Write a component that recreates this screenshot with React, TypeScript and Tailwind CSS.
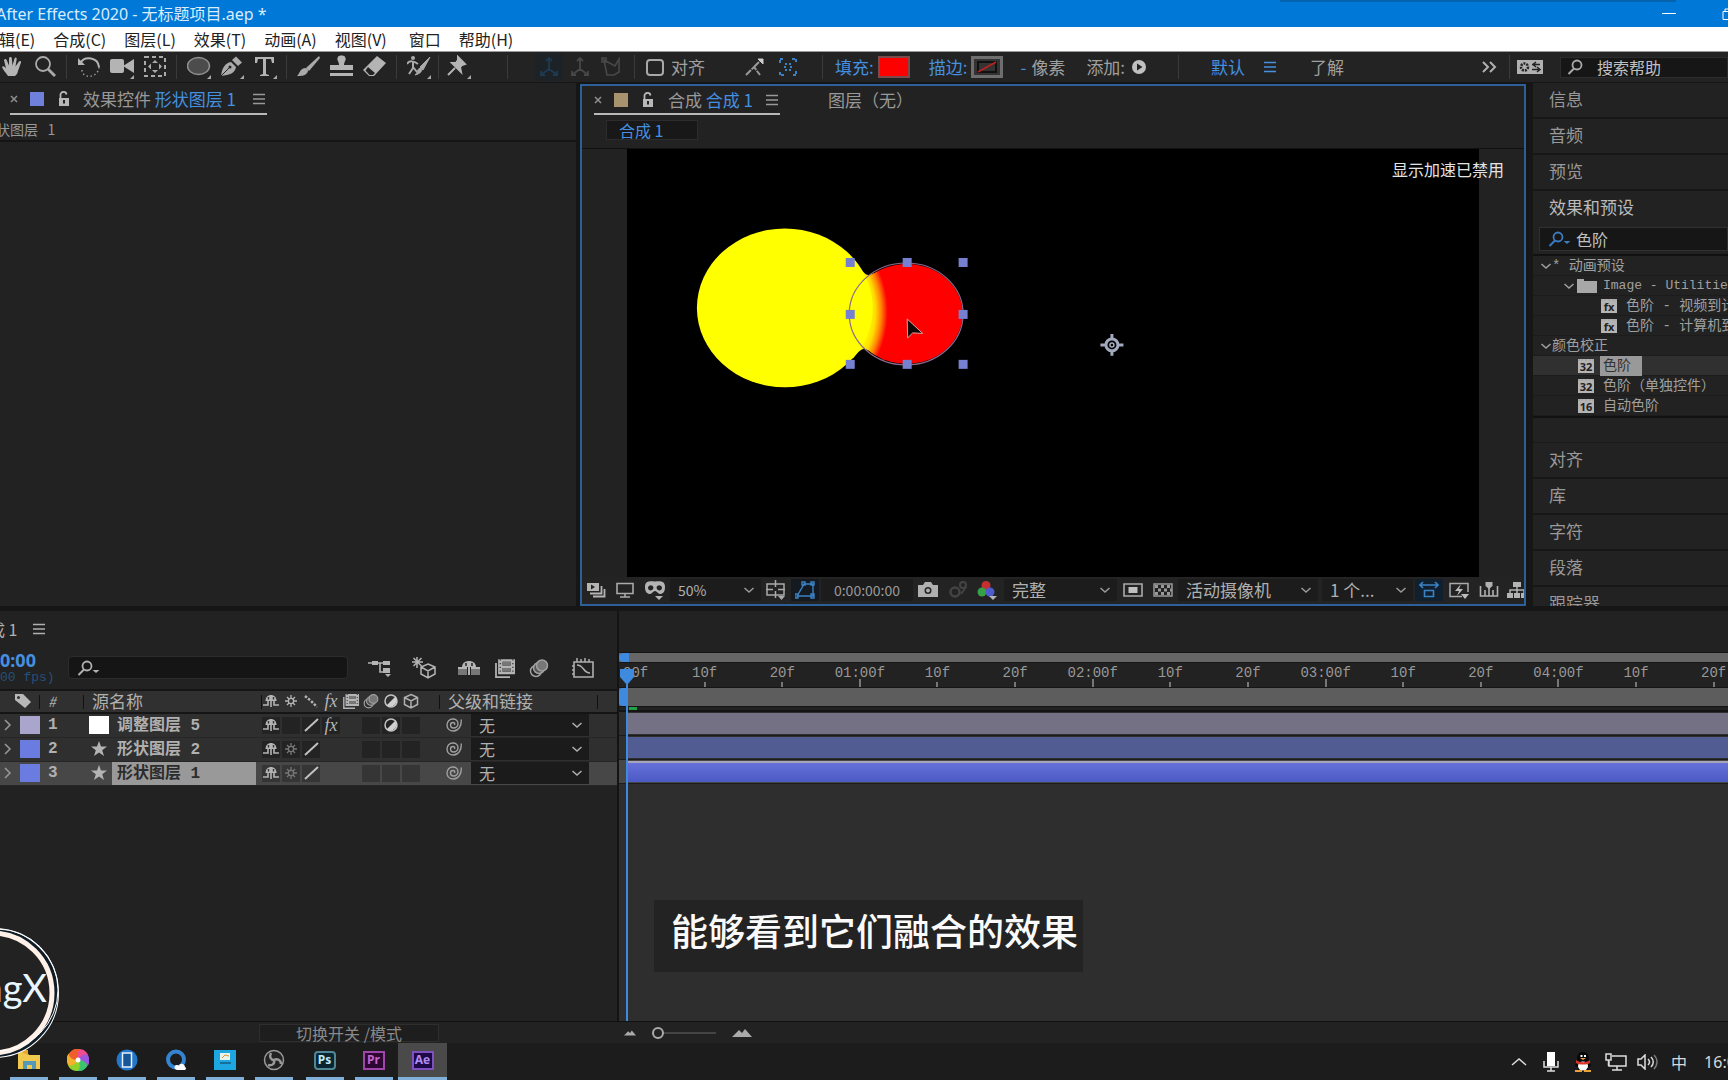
import type { ReactNode } from "react";
import clsx from "clsx";

type IconProps = { className?: string; children: ReactNode; box?: string };

const Icon = ({ className = "w-6 h-6", box = "0 0 24 24", children }: IconProps) => (
  <svg viewBox={box} className={clsx("shrink-0", className)} fill="none" stroke="none" aria-hidden="true">
    {children}
  </svg>
);

/* ---------- shared icons ---------- */

const Chevron = ({ className = "w-3 h-3" }: { className?: string }) => (
  <Icon className={className} box="0 0 12 12">
    <path d="M1.500 4 6 8l4.500-4" stroke="currentColor" strokeWidth="1.500" />
  </Icon>
);

const MenuLines = ({ className = "w-3 h-3" }: { className?: string }) => (
  <Icon className={className} box="0 0 12 12">
    <path d="M0 1.500h12M0 6h12M0 10.500h12" stroke="currentColor" strokeWidth="1.500" />
  </Icon>
);

const CloseMark = () => (
  <Icon className="size-2" box="0 0 8 8">
    <path d="m1 1 6 6M7 1 1 7" stroke="#909090" strokeWidth="1.500" />
  </Icon>
);

const SearchGlyph = ({ className, arrow = true }: { className?: string; arrow?: boolean }) => (
  <Icon className={clsx("w-6 h-4", className)} box="0 0 24 16">
    <circle cx="10" cy="6" r="4.500" stroke="currentColor" strokeWidth="1.800" />
    <path d="M7 9.500 1.500 15" stroke="currentColor" strokeWidth="2" />
    {arrow && <path d="M15.500 10h7L19 13z" fill="currentColor" />}
  </Icon>
);

const Lock = () => (
  <Icon className="w-3 h-4" box="0 0 12 16">
    <path d="M2.500 8V4.500a3 3 0 0 1 6-1" stroke="#b8b8b8" strokeWidth="1.800" />
    <path d="M1 7h10v8H1zM5 9v3.500h2V9z" fill="#b8b8b8" fillRule="evenodd" />
  </Icon>
);

const Shy = () => (
  <Icon className="w-4 h-4" box="0 0 16 16">
    <path d="M2.500 8C2.500 0 13.500 0 13.500 8z" fill="#b4b4b4" />
    <path d="M8 8v6M0 12h5V8M16 12h-5V8" stroke="#b4b4b4" strokeWidth="1.600" />
    <path d="M5.500 4v2.500M10.500 4v2.500" stroke="#333" strokeWidth="1.400" />
  </Icon>
);

const Sun = ({ dim }: { dim?: boolean }) => (
  <Icon className="w-4 h-4" box="0 0 16 16">
    <g stroke={dim ? "#777" : "#b4b4b4"} strokeWidth="1.300">
      <circle cx="8" cy="8" r="2.600" />
      <path d="M8 2v3M8 11v3M2 8h3M11 8h3M4 4l2 2M10 10l2 2M12 4l-2 2M4 12l2-2" />
    </g>
  </Icon>
);

const Slash = () => (
  <Icon className="w-4 h-4" box="0 0 16 16">
    <path d="M2 14 15 2" stroke="#c0c0c0" strokeWidth="2" />
  </Icon>
);

const DottedSlash = () => (
  <Icon className="w-4 h-4" box="0 0 16 16">
    <path d="M2 3l6 5 6 6" stroke="#b4b4b4" strokeWidth="2.500" strokeDasharray="2.500 1.500" />
  </Icon>
);

const Film = ({ className = "w-4 h-4" }: { className?: string }) => (
  <Icon className={className} box="0 0 16 16">
    <path d="M.8 4v11.200H12" stroke="#b4b4b4" strokeWidth="1.400" />
    <path d="M2.500 1H16v12H2.500zM6 3v3h6.500V3zM6 8v3h6.500V8z" fill="#b4b4b4" fillRule="evenodd" />
    <path d="M6 3h6.500v3H6zM6 8h6.500v3H6z" fill="#777" />
    <path d="M4.200 1v12M14.300 1v12" stroke="#333" strokeDasharray="1 2" />
  </Icon>
);

const MotionBlur = ({ className = "w-4 h-4" }: { className?: string }) => (
  <Icon className={className} box="0 0 20 20">
    <circle cx="7" cy="13" r="5.500" stroke="#a0a0a0" strokeWidth="1.500" />
    <circle cx="10" cy="10" r="5.500" fill="#555" stroke="#a0a0a0" strokeWidth="1.500" />
    <circle cx="13" cy="7.500" r="5.500" fill="#777" stroke="#a0a0a0" strokeWidth="1.500" />
  </Icon>
);

const HalfCircle = () => (
  <Icon className="w-4 h-4" box="0 0 16 16">
    <circle cx="8" cy="8" r="6" stroke="#c4c4c4" strokeWidth="1.500" />
    <path d="M12.500 3.500a6.500 6.500 0 0 1-9 9z" fill="#d0d0d0" />
  </Icon>
);

const Cube = ({ className = "w-4 h-4" }: { className?: string }) => (
  <Icon className={className} box="0 0 16 16">
    <path d="M8 1.500 14.500 4.500v7L8 15l-6.500-3.500v-7zM1.500 4.500 8 8l6.500-3.500M8 8v7" stroke="#b0b0b0" strokeWidth="1.500" />
  </Icon>
);

const Fx = () => <span className="text-lg/4 italic text-[#b4b4b4] font-['Liberation_Serif',serif]">fx</span>;

const Spiral = () => (
  <Icon className="w-4 h-4" box="0 0 16 16">
    <path
      d="M15.200 2.500c.5 6.500-2.700 11.500-7.700 11.500C3.500 14 1 11.500 1 8s2.500-6 5.800-6c3 0 5.200 2 5.200 4.500S10 11 7.500 11C5.500 11 4.500 9.500 4.500 8S5.500 5.500 7 5.500 9 6.500 8.500 8"
      stroke="#a0a0a0"
      strokeWidth="1.400"
    />
  </Icon>
);

const Star = () => (
  <Icon className="w-4 h-4" box="0 0 16 16">
    <path d="m8 0 2 5.600h6l-4.800 3.700L13 15l-5-3.500L3 15l1.800-5.700L0 5.600h6z" fill="#b4b4b4" />
  </Icon>
);

/* ---------- title and menus ---------- */

const TitleBar = () => (
  <header className="relative flex h-[27px] shrink-0 items-center justify-between overflow-hidden bg-[#0078d7]">
    <h1 className="-ml-1 whitespace-nowrap text-base text-[#d8ecfb] font-normal font-['Noto_Sans','Noto_Sans_CJK_SC',sans-serif]">
      After Effects 2020 - 无标题项目.aep *
    </h1>
    <div className="flex items-center gap-[46px]">
      <button aria-label="最小化" className="h-px w-3.5 bg-white" />
      <button aria-label="还原" className="-mr-1.5">
        <Icon className="w-3 h-3" box="0 0 12 12">
          <path d="M1 3.500h8v8H1zM3 3V1h8v8H9.500" stroke="#fff" />
        </Icon>
      </button>
    </div>
    <div className="absolute right-[52px] top-0 h-0.5 w-[396px] bg-[#0563ad]" />
  </header>
);

const menus = ["编辑(E)", "合成(C)", "图层(L)", "效果(T)", "动画(A)", "视图(V)", "窗口", "帮助(H)"];

const MenuBar = () => (
  <nav className="flex h-[25px] shrink-0 items-center gap-[18px] overflow-hidden border-b border-[#999] bg-white text-base/6 text-[#222]">
    {menus.map((m, i) => (
      <button key={m} className={clsx("whitespace-nowrap", i === 0 && "-ml-[17px]", i === 6 && "ml-1")}>
        {m}
      </button>
    ))}
  </nav>
);

/* ---------- toolbar ---------- */

const Tool = ({ label, corner, children }: { label: string; corner?: boolean; children: ReactNode }) => (
  <button aria-label={label} className="flex w-[33px] shrink-0 justify-center">
    <Icon>
      {children}
      {corner && <path d="M24 20v4h-4z" fill="#aaa" />}
    </Icon>
  </button>
);

const Sep = ({ className = "mx-[5px]" }: { className?: string }) => (
  <span className={clsx("h-6 w-px shrink-0 bg-[#3a3a3a]", className)} />
);

const Toolbar = () => (
  <div className="flex h-[30px] shrink-0 items-center overflow-hidden whitespace-nowrap bg-[#232323] text-[17px]/6 text-[#a0a0a0]">
    <div className="-ml-[5px] flex items-center">
      <Tool label="手形工具">
        <path
          d="M8 21c-2-3-5-6-6-9 1-1.500 2.500-.5 4 1.500L4 5c.8-1.500 2.300-1 2.900.5L9 10.500V3c.5-1.500 2.500-1.500 2.800 0l.7 7.500 2-7c.6-1.500 2.400-1 2.200.5L15.500 11.500l3.500-5c1-1.200 2.500-.3 2 1L18 16c-.5 2.500-1.500 3.500-3 5z"
          fill="#b4b4b4"
        />
      </Tool>
      <Tool label="缩放工具">
        <circle cx="10" cy="9" r="7" stroke="#aaa" strokeWidth="1.800" />
        <path d="m15 14 7 7" stroke="#aaa" strokeWidth="2.800" />
      </Tool>
    </div>
    <Sep />
    <div className="flex items-center">
      <Tool label="旋转工具">
        <path d="M4 7c4-6 17-5 18 5" stroke="#b4b4b4" strokeWidth="2" />
        <path d="M22 12c-1 12-18 12-17 2" stroke="#999" strokeWidth="1.500" strokeDasharray="1.500 2.500" />
        <path d="M1 3v7h7z" fill="#b4b4b4" />
      </Tool>
      <Tool label="摄像机工具" corner>
        <rect x="0" y="4" width="14" height="14" rx="2" fill="#b4b4b4" />
        <path d="m13 11 11-7v14z" fill="#b4b4b4" />
      </Tool>
      <Tool label="锚点工具">
        <path d="M2 2h20v19H2z" stroke="#aaa" strokeWidth="2" strokeDasharray="4 3" />
        <path d="m12 5 3 3H9zM12 18l3-3H9zM5 11.500l3-3v6zM19 11.500l-3-3v6z" fill="#aaa" />
      </Tool>
    </div>
    <Sep />
    <div className="flex items-center">
      <Tool label="椭圆工具" corner>
        <ellipse cx="11.500" cy="11" rx="11" ry="8.500" fill="#4c4c4c" stroke="#909090" strokeWidth="1.500" />
      </Tool>
      <Tool label="钢笔工具" corner>
        <path d="M1 21c1-8 4-13 10-14l5 5c-1 6-6 8-15 9z" fill="#aaa" />
        <path d="m12 5 4-3.500 6 6-4 3.500z" fill="#aaa" />
        <path d="m1 21 8-8" stroke="#232323" />
        <circle cx="10" cy="12" r="1.500" fill="#232323" />
      </Tool>
      <Tool label="文字工具" corner>
        <path d="M2 2h19v6h-2l-1-4h-5v15l3 1v1H7v-1l3-1V4H5L4 8H2z" fill="#b4b4b4" />
      </Tool>
    </div>
    <Sep />
    <div className="flex items-center">
      <Tool label="画笔工具">
        <path d="M22 1 9 13l3 3L23 3z" fill="#aaa" />
        <path d="M8 13c3 0 4 3 2 5-2 3-6 3-10 3 3-2 2-7 8-8z" fill="#aaa" />
      </Tool>
      <Tool label="仿制图章工具">
        <path d="M8 2c0-2 7-2 7 0 2 3-1 4-1 8h9v5H0v-5h9c0-4-3-5-1-8zM0 18h23v3H0z" fill="#b4b4b4" />
      </Tool>
      <Tool label="橡皮擦工具">
        <path d="M14 1 23 8 11 21H6l-6-6z" fill="#b4b4b4" />
        <path d="m5 12 7 6-2 2H6.500L2.500 15.500z" fill="#232323" />
      </Tool>
    </div>
    <Sep />
    <Tool label="Roto 笔刷工具" corner>
      <path d="M23 2 13 12l3 3zM13 13c3 0 3 5-5 7 3-2 2-6 5-7z" fill="#aaa" stroke="#aaa" />
      <circle cx="6" cy="3" r="2" fill="#aaa" />
      <path d="M0 9c2-4 7-3 11 0M6 6v7l-4 6M6 12l4 5" stroke="#aaa" strokeWidth="2" />
    </Tool>
    <Sep className="mx-[3px]" />
    <Tool label="人偶位置控点工具" corner>
      <path d="M11 2 18 9l-3 1-2 2 1 5-9-9 4 0 2-3z" fill="#b4b4b4" stroke="#b4b4b4" strokeWidth="2" />
      <path d="m8 13-7 7" stroke="#b4b4b4" strokeWidth="2" />
    </Tool>
    <Sep className="ml-8" />
    <div className="ml-[27px] flex items-center">
      {["本地轴模式", "世界轴模式", "视图轴模式"].map((label, i) => (
        <button
          key={label}
          aria-label={label}
          className={clsx(
            "mr-[3px] flex size-7 items-center justify-center rounded-sm",
            i === 0 ? "bg-[#1d2227] text-[#1e3a52]" : "text-[#484848]",
          )}
        >
          <Icon className="size-5" box="0 0 20 20">
            {i < 2 ? (
              <path d="M10 12V2M10 12l-7 5M10 12l7 5M7 4l3-3 3 3M2 14v4h4M18 14v4h-4" stroke="currentColor" strokeWidth="1.800" />
            ) : (
              <path d="M3 3 14 9l4-7v13l-5 3H6zM1 1h4v4H1z" stroke="currentColor" strokeWidth="1.600" />
            )}
          </Icon>
        </button>
      ))}
    </div>
    <Sep className="ml-1.5" />
    <label className="ml-[11px] flex items-center gap-[7px]">
      <input type="checkbox" className="h-[17px] w-[18px] appearance-none rounded-sm border-2 border-[#a8a8a8]" />
      对齐
    </label>
    <Icon className="ml-10 w-5 h-5" box="0 0 20 20">
      <path d="m1 18 8-8 6 8M9 10l6-6" stroke="#999" strokeWidth="2" strokeDasharray="7 1" />
      <path d="M13 2h5v5z" fill="#ccc" stroke="#ccc" />
    </Icon>
    <Icon className="ml-[13px] w-5 h-5" box="0 0 20 20">
      <path d="M2 6V2h4M14 2h4v4M18 14v4h-4M6 18H2v-4" stroke="#3b82c4" strokeWidth="2" strokeDasharray="3 1" />
      <path d="M7 7h6v6H7z" stroke="#3b82c4" strokeWidth="2" strokeDasharray="2 2" />
    </Icon>
    <Sep className="ml-[24px]" />
    <button className="ml-3 flex items-center gap-1 text-[#4590e0]">
      填充:
      <span className="h-[22px] w-8 border-2 border-[#7c4a4a] bg-[#fd0000]" />
    </button>
    <button className="ml-[19px] flex items-center gap-1 text-[#4590e0]">
      描边:
      <span className="flex h-[22px] w-8 items-center justify-center border-[3px] border-[#6e6e6e] bg-[#333]">
        <Icon className="h-3 w-5" box="0 0 20 12">
          <path d="M1 1h18v10H1z" stroke="#111" strokeWidth="2" />
          <path d="M1 11 19 1" stroke="#c02020" strokeWidth="1.500" />
        </Icon>
      </span>
    </button>
    <span className="ml-[17px] text-[#4590e0]">-</span>
    <span className="ml-[5px]">像素</span>
    <button className="ml-[21px] flex items-center gap-[7px]">
      添加:
      <Icon className="w-3.5 h-3.5" box="0 0 14 14">
        <circle cx="7" cy="7" r="7" fill="#c0c0c0" />
        <path d="m5 3.500 5.500 3.500L5 10.500z" fill="#222" />
      </Icon>
    </button>
    <Sep className="ml-8" />
    <button className="ml-8 text-[#4590e0]">默认</button>
    <button aria-label="工作区菜单" className="ml-[19px] text-[#4590e0]">
      <MenuLines />
    </button>
    <button className="ml-[34px]">了解</button>
    <button aria-label="更多工作区" className="ml-auto">
      <Icon className="w-4 h-4" box="0 0 16 16">
        <path d="m2 3 5 5-5 5M9 3l5 5-5 5" stroke="#b0b0b0" strokeWidth="2" />
      </Icon>
    </button>
    <Sep className="ml-3" />
    <Icon className="ml-[7px] h-4 w-[26px]" box="0 0 26 16">
      <path d="M0 1h26v14H0z" fill="#b0b0b0" />
      <circle cx="7.500" cy="8" r="3.500" stroke="#222" strokeWidth="2.500" strokeDasharray="2 1" />
      <path d="M15 5.500h8M15 10.500h8M19 3l-3 2.500L19 8M20 8l3 2.500-3 2.500" stroke="#222" strokeWidth="1.500" />
    </Icon>
    <label className="ml-[17px] flex h-[21px] w-[168px] shrink-0 items-center border border-[#2c2c2c] bg-[#161616] pl-1.5">
      <SearchGlyph arrow={false} className="text-[#aaa]" />
      <input aria-label="搜索帮助" placeholder="搜索帮助" className="ml-1.5 w-32 bg-transparent text-base/5 text-[#c0c0c0] outline-none placeholder:text-[#c0c0c0]" />
    </label>
  </div>
);

/* ---------- effect controls ---------- */

const EffectControls = () => (
  <section className="mr-1 flex w-[576px] shrink-0 flex-col bg-[#222]">
    <div className="flex h-8 items-center pl-2.5">
      <div className="flex h-8 items-center border-b-2 border-[#b8b8b8] pr-0.5 pt-px text-[17px]/6 text-[#999]">
        <button aria-label="关闭"><CloseMark /></button>
        <span className="ml-3 size-3.5 bg-[#6f80dc]" />
        <span className="ml-3.5"><Lock /></span>
        <span className="ml-[13px] whitespace-nowrap">
          效果控件 <span className="text-[#4590e0]">形状图层 1</span>
        </span>
        <button aria-label="面板菜单" className="ml-[17px]"><MenuLines className="w-3 h-3" /></button>
      </div>
    </div>
    <div className="mt-0.5 h-[25px] overflow-hidden border-b-2 border-[#151515] text-sm/6 text-[#999]">
      <span className="-ml-1">状图层&nbsp;&nbsp; 1</span>
    </div>
  </section>
);

/* ---------- composition viewer ---------- */

const handles = [
  [223, 114], [280, 114], [336, 114],
  [223, 166], [336, 166],
  [223, 216], [280, 216], [336, 216],
];

const CompositionArt = () => (
  <svg viewBox="0 0 853 428" className="block h-full w-full bg-black" role="img" aria-label="合成 1">
    <defs>
      <radialGradient id="melt" gradientUnits="userSpaceOnUse" cx="158" cy="163" r="103">
        <stop offset="0.800" stopColor="#ffff00" />
        <stop offset="0.880" stopColor="#ffdc00" />
        <stop offset="0.940" stopColor="#ff8000" />
        <stop offset="1" stopColor="#ff0000" />
      </radialGradient>
    </defs>
    <ellipse cx="280" cy="165" rx="56" ry="50" fill="url(#melt)" />
    <path d="M228 112Q238 127 242 126Q250 124 258 120V212Q246 202 238 200Q234 199 226 210z" fill="url(#melt)" />
    <ellipse cx="158" cy="159" rx="88" ry="79.500" fill="#ffff00" />
    <ellipse cx="279.500" cy="165" rx="57" ry="51" fill="none" stroke="#8a6a8a" strokeWidth="1.200" />
    {handles.map(([x, y]) => (
      <rect key={`${x}-${y}`} x={x - 4} y={y - 5} width="9" height="9" fill="#7580d0" />
    ))}
    <path d="m280.500 170 .5 19 5-5 10 .5z" fill="#100505" stroke="#e8a0a0" strokeWidth="1" />
    <g stroke="#a4aabe" fill="none">
      <circle cx="485.500" cy="196" r="6" strokeWidth="3" />
      <circle cx="485.500" cy="196" r="2" strokeWidth="1.500" />
      <path d="M485.500 185v6M485.500 201v6M474 196h6M491 196h6" strokeWidth="3" />
    </g>
  </svg>
);

const FooterSelect = ({ label, value, className }: { label: string; value: string; className: string }) => (
  <label className={clsx("relative flex h-[22px] shrink-0 items-center bg-[#1c1c1c]", className)}>
    <select aria-label={label} className="w-full appearance-none bg-transparent pl-2 outline-none">
      <option>{value}</option>
    </select>
    <span className="pointer-events-none absolute right-1.5 text-[#999]"><Chevron /></span>
  </label>
);

const FooterIcon = ({ label, className = "w-[30px]", children }: { label: string; className?: string; children: ReactNode }) => (
  <button aria-label={label} className={clsx("flex h-[22px] shrink-0 items-center justify-center", className)}>
    <Icon className="size-5" box="0 0 20 20">{children}</Icon>
  </button>
);

const ViewerFooter = () => (
  <div className="flex h-[27px] shrink-0 items-center overflow-hidden whitespace-nowrap bg-[#232323] text-[17px]/5 text-[#b0b0b0]">
    <FooterIcon label="始终预览此视图" className="w-7">
      <path d="M1 3h12v8H1z" fill="#b4b4b4" />
      <path d="m5 4.500 4 2.500-4 2.500z" fill="#222" />
      <path d="M4 13.500h11.500V6M7 16.500h11.500V9" stroke="#b4b4b4" strokeWidth="1.800" />
    </FooterIcon>
    <FooterIcon label="主查看器" className="w-[29px]">
      <path d="M2 3.500h16v10H2zM10 14v3M5 17h10" stroke="#aaa" strokeWidth="1.600" />
    </FooterIcon>
    <FooterIcon label="VR 视图" className="w-[31px]">
      <path d="M0 7C0 0 6 1.500 10 1.500S20 0 20 7c0 6-3 7-5 7s-3-3-5-3-3 3-5 3-5-1-5-7zM3 7.500c0 4 5 4 5.500 0-1-3-4.500-3-5.500 0zM11.500 7.500c.5 4 5.500 4 5.500 0-1-3-4.500-3-5.500 0z" fill="#b4b4b4" fillRule="evenodd" />
      <path d="M10 16h8l-4 4z" fill="#b4b4b4" />
    </FooterIcon>
    <label className="relative flex h-[22px] w-[91px] shrink-0 items-center bg-[#1c1c1c]">
      <select aria-label="放大率" className="w-full appearance-none bg-transparent pl-2 text-sm/5 outline-none">
        <option>50%</option>
      </select>
      <span className="pointer-events-none absolute right-1.5 text-[#999]"><Chevron /></span>
    </label>
    <FooterIcon label="网格和参考线">
      <path d="M1 4h17v11H1zM9.500 0v7M9.500 11v7M0 9.500h7M12 9.500h7" stroke="#aaa" strokeWidth="1.500" />
      <path d="M12 16h7l-3.500 4z" fill="#aaa" />
    </FooterIcon>
    <FooterIcon label="蒙版和形状路径可见性" className="w-7 bg-[#141a20]">
      <path d="M2 16h16V4H9c-2 4-4 7-7 12zM0 14h3v4H0zM16 14h3v4h-3zM16 2h3v3h-3zM7 2h3v3H7z" stroke="#3b82c4" strokeWidth="1.400" />
    </FooterIcon>
    <button className="ml-0.5 h-[22px] w-[92px] shrink-0 bg-[#1c1c1c] text-sm/5 text-[#999]">0:00:00:00</button>
    <FooterIcon label="拍摄快照">
      <path d="M0 5h5l2-3h6l2 3h5v12H0zM10 7a3.500 3.500 0 1 0 0 7 3.500 3.500 0 0 0 0-7z" fill="#b0b0b0" fillRule="evenodd" />
      <circle cx="10" cy="10.500" r="2" fill="#b0b0b0" />
    </FooterIcon>
    <FooterIcon label="显示快照" className="w-[29px]">
      <circle cx="7" cy="12" r="4.500" stroke="#444" strokeWidth="2.500" />
      <circle cx="15" cy="5" r="3" stroke="#444" strokeWidth="2" />
      <path d="m13 14 5-7" stroke="#444" strokeWidth="2" />
    </FooterIcon>
    <FooterIcon label="显示通道及色彩管理设置">
      <circle cx="9" cy="5.500" r="4.500" fill="#c43030" />
      <circle cx="5" cy="12" r="4.500" fill="#35a045" />
      <circle cx="13" cy="12" r="4.500" fill="#4c5ccc" />
      <path d="M12 16h8l-4 4z" fill="#b4b4b4" />
    </FooterIcon>
    <FooterSelect label="分辨率" value="完整" className="ml-0.5 w-[113px]" />
    <FooterIcon label="目标区域" className="w-8">
      <path d="M1 4h18v12H1z" stroke="#aaa" strokeWidth="1.600" />
      <path d="M5.500 7h9v6h-9z" fill="#c0c0c0" />
    </FooterIcon>
    <FooterIcon label="切换透明网格" className="w-7">
      <path d="M1 4h18v12H1z" stroke="#999" strokeWidth="1.500" />
      <path d="M2 6.500h16M2 13.500h16" stroke="#999" strokeWidth="3" strokeDasharray="3 3" />
      <path d="M5 10h14" stroke="#999" strokeWidth="3" strokeDasharray="3 3" />
    </FooterIcon>
    <FooterSelect label="3D 视图" value="活动摄像机" className="ml-px w-[140px]" />
    <FooterSelect label="选择视图布局" value="1 个..." className="ml-1 w-[91px]" />
    <FooterIcon label="切换像素长宽比校正" className="ml-0.5 w-7 bg-[#10202f]">
      <path d="M1 5h18M4 2 1 5l3 3M16 2l3 3-3 3M5.500 10.500h9v6h-9z" stroke="#3b82c4" strokeWidth="1.600" />
    </FooterIcon>
    <FooterIcon label="快速预览" className="w-8">
      <path d="M13 16.500H1v-13h18V12" stroke="#aaa" strokeWidth="1.500" />
      <path d="m12 4-6 7h4l-2 5 6-7h-4z" fill="#bbb" />
      <path d="M12 14h8l-4 5z" fill="#bbb" />
    </FooterIcon>
    <FooterIcon label="时间轴" className="w-[28px]">
      <path d="M1.500 6v10h17V6M6 10v6M14 10v6M10 6v10" stroke="#b0b0b0" strokeWidth="1.600" />
      <path d="M6.500 2h7v4L10 9 6.500 6z" fill="#b0b0b0" />
    </FooterIcon>
    <FooterIcon label="合成流程图" className="w-7">
      <path d="M6 2h8v5H6zM0 13h6v5H0zM14 13h6v5h-6zM7 13h6v5H7z" fill="#b4b4b4" />
      <path d="M3 14v-4h14v4M10 7v6" stroke="#b4b4b4" strokeWidth="1.500" />
    </FooterIcon>
  </div>
);

const Viewer = () => (
  <section className="mr-[7px] mt-px flex min-w-0 flex-1 flex-col border-2 border-[#2c6098] bg-[#222]">
    <div className="flex h-[31px] shrink-0 items-start whitespace-nowrap pl-3 text-[17px]/7 text-[#999]">
      <div className="flex h-[29px] items-center border-b-2 border-[#b8b8b8] pr-0.5">
        <button aria-label="关闭"><CloseMark /></button>
        <span className="ml-3 size-3.5 bg-[#a8936f]" />
        <span className="ml-3.5"><Lock /></span>
        <span className="ml-3.5">
          合成 <span className="text-[#4590e0]">合成 1</span>
        </span>
        <button aria-label="面板菜单" className="ml-[13px]"><MenuLines /></button>
      </div>
      <button className="ml-12">图层（无）</button>
    </div>
    <div className="flex h-8 shrink-0 items-start border-b border-[#111] pl-6 pt-[3px]">
      <button className="h-5 w-[92px] border border-[#2c2c2c] bg-[#181818] pl-3 text-left text-base/4 text-[#4590e0]">合成 1</button>
    </div>
    <div className="relative min-h-0 flex-1 px-[45px]">
      <CompositionArt />
      <p className="absolute right-5 top-2 text-base/6 text-[#e4e4e4]">显示加速已禁用</p>
    </div>
    <ViewerFooter />
  </section>
);

/* ---------- right-hand panel stack ---------- */

const Badge = ({ text }: { text: string }) => (
  <span className="flex h-3.5 w-4 shrink-0 items-center justify-center border-t-2 border-dotted border-[#aaa] bg-[#b4b4b4] text-[11px]/3 font-bold text-[#222] font-['Noto_Sans',sans-serif]">
    {text}
  </span>
);

const presets = [
  { pad: "pl-[7px]", open: true, text: "* 动画预设" },
  { pad: "pl-[30px]", open: true, folder: true, text: "Image - Utilities" },
  { pad: "pl-[68px]", badge: "fx", text: "色阶 - 视频到计算机" },
  { pad: "pl-[68px]", badge: "fx", text: "色阶 - 计算机到视频" },
  { pad: "pl-[7px]", open: true, text: "颜色校正" },
  { pad: "pl-[45px]", badge: "32", text: "色阶", selected: true },
  { pad: "pl-[45px]", badge: "32", text: "色阶（单独控件）" },
  { pad: "pl-[45px]", badge: "16", text: "自动色阶" },
];

const PanelTab = ({ children }: { children: ReactNode }) => (
  <button className="flex h-9 w-full shrink-0 items-start border-b-2 border-[#171717] pl-4 text-left text-[17px]/8 text-[#999]">{children}</button>
);

const SidePanels = () => (
  <aside className="flex w-[195px] shrink-0 flex-col overflow-hidden whitespace-nowrap bg-[#222]">
    <PanelTab>信息</PanelTab>
    <PanelTab>音频</PanelTab>
    <PanelTab>预览</PanelTab>
    <h2 className="h-9 shrink-0 pl-4 text-[17px]/8 text-[#bbb] font-normal">效果和预设</h2>
    <label className="ml-1.5 flex h-6 shrink-0 items-center border border-[#303030] bg-[#161616] pl-2">
      <SearchGlyph className="text-[#3b7cc0]" />
      <input aria-label="搜索效果" defaultValue="色阶" className="ml-1 w-32 bg-transparent text-base/5 text-[#c0c0c0] outline-none" />
    </label>
    <ul className="mt-[3px] shrink-0 border-y-2 border-[#111] text-sm/5 text-[#a0a0a0] font-['Liberation_Mono','Noto_Sans_CJK_SC',monospace]">
      {presets.map((p) => (
        <li key={p.text} className={clsx("flex h-5 items-center border-b border-[#1c1c1c]", p.pad, p.selected && "bg-[#303030]")}>
          {p.open && <Chevron className="w-3 h-3" />}
          {p.folder && (
            <Icon className="ml-0.5 h-3.5 w-5" box="0 0 20 14">
              <path d="M0 0h7v2h13v12H0z" fill="#a8a8a8" />
            </Icon>
          )}
          {p.badge && <Badge text={p.badge} />}
          <span className={clsx(!p.open && "ml-1.5 px-[3px]", p.folder && "ml-1.5 text-[13px]", p.selected && "w-[42px] bg-[#999] text-[#333]")}>{p.text}</span>
        </li>
      ))}
    </ul>
    <div className="h-[25px] shrink-0 border-b border-[#1a1a1a]" />
    <PanelTab>对齐</PanelTab>
    <PanelTab>库</PanelTab>
    <PanelTab>字符</PanelTab>
    <PanelTab>段落</PanelTab>
    <PanelTab>跟踪器</PanelTab>
  </aside>
);

/* ---------- timeline ---------- */

const layers = [
  { id: 1, name: "调整图层 5", swatch: "bg-[#a9a5cd]", bar: "bg-[#747185]", adjustment: true },
  { id: 2, name: "形状图层 2", swatch: "bg-[#6a7ce0]", bar: "bg-[#515c92]" },
  { id: 3, name: "形状图层 1", swatch: "bg-[#6a7ce0]", bar: "bg-linear-to-b from-[#6670d8] to-[#4c5ac4] border-t-2 border-[#a8a4bc]", selected: true },
];

const Cell = ({ children, blank }: { children?: ReactNode; blank?: boolean }) => (
  <td className="p-0">
    <span className={clsx("flex h-[17px] w-[18px] items-center justify-center", !blank && "bg-black/25")}>{children}</span>
  </td>
);

const headCell = "relative p-0 text-left font-normal";
const Divider = () => <span className="absolute right-0 top-1 h-3.5 w-px bg-[#111]" />;

const LayerTable = () => (
  <table className="w-[617px] table-fixed border-collapse text-[#b0b0b0]">
    <colgroup>
      <col className="w-4" />
      <col className="w-6" />
      <col className="w-11" />
      <col className="w-[178px]" />
      {Array.from({ length: 8 }, (_, i) => (
        <col key={i} className="w-5" />
      ))}
      <col className="w-[18px]" />
      <col className="w-[158px]" />
      <col />
    </colgroup>
    <thead>
      <tr className="h-[23px] border-y-2 border-[#151515] bg-[#303030]">
        <th className={headCell} colSpan={2}>
          <Icon className="ml-3.5 w-[18px] h-4" box="0 0 18 16">
            <path d="M1 1h8l8 8-6 6-10-8zM4.500 3a1.500 1.500 0 1 0 0 3 1.500 1.500 0 0 0 0-3z" fill="#b8b8b8" fillRule="evenodd" />
          </Icon>
          <Divider />
        </th>
        <th className={headCell}><span className="block pl-2 text-sm/5 italic">#</span><Divider /></th>
        <th className={headCell}><span className="block pl-2 text-[17px]/5">源名称</span><Divider /></th>
        {[<Shy />, <Sun />, <DottedSlash />, <Fx />, <Film />, <MotionBlur />, <HalfCircle />, <Cube />].map((icon, i) => (
          <th key={i} className={headCell}><span className="flex w-[18px] justify-center">{icon}</span></th>
        ))}
        <th className={headCell}><Divider /></th>
        <th className={headCell}><span className="block pl-2 text-[17px]/5">父级和链接</span><Divider /></th>
        <th className={headCell} />
      </tr>
    </thead>
    <tbody>
      {layers.map((l) => (
        <tr key={l.id} className={clsx("h-6 border-b border-[#262626]", l.selected ? "bg-[#474747]" : "bg-[#2f2f2f]")}>
          <td className="p-0">
            <button aria-label="展开" className="ml-0.5 flex"><Icon className="w-3 h-3" box="0 0 12 12"><path d="m3 1 5 5-5 5" stroke="#999" strokeWidth="1.500" /></Icon></button>
          </td>
          <td className="p-0"><span className={clsx("ml-1 block h-[18px] w-5", l.swatch)} /></td>
          <td className="p-0 pl-2 text-base/5 font-bold font-['Liberation_Mono',monospace]">{l.id}</td>
          <td className="p-0">
            <div className="flex h-[23px] items-center">
              <span className="ml-0.5 flex w-[26px] justify-center">
                {l.adjustment ? <span className="h-[18px] w-5 bg-white" /> : <Star />}
              </span>
              <span
                className={clsx(
                  "flex h-[23px] w-36 items-center whitespace-pre pl-[5px] pt-0.5 text-base/5 font-bold font-['Liberation_Mono','Noto_Sans_CJK_SC',monospace]",
                  l.selected && "bg-[#999] text-[#2c2c2c]",
                )}
              >
                {l.name}
              </span>
            </div>
          </td>
          <Cell><Shy /></Cell>
          <Cell>{!l.adjustment && <Sun dim />}</Cell>
          <Cell><Slash /></Cell>
          <Cell blank={!l.adjustment}>{l.adjustment && <Fx />}</Cell>
          <Cell blank />
          <Cell />
          <Cell>{l.adjustment && <HalfCircle />}</Cell>
          <Cell />
          <td className="p-0" />
          <td className="p-0">
            <div className="flex items-center">
              <span className="ml-1.5"><Spiral /></span>
              <label className="relative ml-[9px] flex h-[22px] w-[118px] items-center bg-[#1b1b1b]">
                <select aria-label={`${l.name} 父级`} className="w-full appearance-none bg-transparent pl-2 text-base/5 outline-none">
                  <option>无</option>
                </select>
                <span className="pointer-events-none absolute right-1.5"><Chevron /></span>
              </label>
            </div>
          </td>
          <td className="p-0" />
        </tr>
      ))}
    </tbody>
  </table>
);

const TimelineControls = () => (
  <div className="flex h-[42px] items-center">
    <div className="h-9 w-[68px] overflow-hidden">
      <p className="whitespace-nowrap text-lg/5 font-bold text-[#4590e0] font-['Noto_Sans',sans-serif]">0:00</p>
      <p className="whitespace-nowrap text-[13px]/4 text-[#24517c] font-['Liberation_Mono',monospace]">00 fps)</p>
    </div>
    <label className="flex h-[23px] w-[280px] items-center rounded-sm border border-[#2c2c2c] bg-[#151515] pl-2">
      <SearchGlyph className="text-[#b0b0b0]" />
      <input aria-label="搜索图层" className="w-56 bg-transparent outline-none" />
    </label>
    <button aria-label="合成微型流程图" className="ml-5">
      <Icon className="w-6 h-5" box="0 0 24 20">
        <path d="M0 5h12M12 5h8M12 5v9h8" stroke="#b4b4b4" strokeWidth="1.600" />
        <path d="M4 3h6v4H4zM15 3h7v4h-7zM15 10h7v5h-7zM17 16h6l-3 3z" fill="#b4b4b4" />
      </Icon>
    </button>
    <button aria-label="草图 3D" className="ml-5 flex">
      <Icon className="w-6 h-6" box="0 0 24 24">
        <path d="M5 1v11M0 6h11M1.500 2l8 8M9.500 2l-8 8" stroke="#b4b4b4" strokeWidth="1.500" />
        <path d="m16 8 7 3v7l-7 4-7-4v-7zM9 11l7 4 7-4M16 15v7" stroke="#b4b4b4" strokeWidth="1.500" />
      </Icon>
    </button>
    <button aria-label="隐藏图层" className="ml-[21px]">
      <Icon className="w-6 h-5" box="0 0 24 20">
        <path d="M5 9c0-8 14-8 14 0z" fill="#b4b4b4" />
        <path d="M9 5v3M15 5v3" stroke="#222" strokeWidth="1.500" />
        <path d="M1 11h9v6H1zM14 11h9v6h-9z" fill="#777" />
        <path d="M1 10h9M14 10h9M12 5v12" stroke="#b4b4b4" strokeWidth="2" />
      </Icon>
    </button>
    <button aria-label="帧混合" className="ml-3.5"><Film className="size-5" /></button>
    <button aria-label="运动模糊" className="ml-3.5"><MotionBlur className="size-5" /></button>
    <button aria-label="图表编辑器" className="ml-[23px]">
      <Icon className="w-[22px] h-5" box="0 0 22 20">
        <path d="M2 4h19v15H2z" stroke="#b0b0b0" strokeWidth="1.600" />
        <path d="M5 7c7 0 6 8 13 8M5 0v4M9 1v3M13 0v4M17 1v3M0 8h2M0 12h2M0 16h2" stroke="#b0b0b0" strokeWidth="1.500" />
      </Icon>
    </button>
  </div>
);

// One label every ten frames at 30 fps, whole seconds on every third mark
const marks = Array.from({ length: 15 }, (_, i) =>
  i === 0 ? "00f" : i % 3 === 0 ? `0${i / 3}:00f` : `${(i % 3) * 10}f`,
);

const Ruler = () => (
  <div className="relative ml-2 h-6">
    {marks.map((m, i) => (
      <div key={m + i} className="absolute bottom-0 flex h-full w-0 flex-col items-center justify-end" style={{ left: `${i * 7.05}%` }}>
        <span className={clsx("absolute top-0 text-sm/5 text-[#999] font-['Liberation_Mono',monospace]", i === 0 && "-left-1")}>{m}</span>
        <span className={clsx("w-0.5 bg-[#777]", i % 3 === 0 ? "h-2" : "h-[5px]")} />
      </div>
    ))}
  </div>
);

const Tracks = () => (
  <div className="relative flex min-w-0 flex-1 flex-col border-l-2 border-[#141414] bg-[#2e2e2e]">
    <div className="bg-[#222] pt-[41px]">
      <div className="flex h-[11px] border-y border-[#151515] bg-[#666]">
        <span className="w-2.5 rounded-l-lg bg-[#3d8adf]" />
      </div>
      <Ruler />
      <div className="flex h-5 border-y border-[#151515] bg-[#5d5d5d]">
        <span className="w-2 rounded-l bg-[#3d8adf]" />
      </div>
      <div className="h-[5px] border-b-2 border-[#151515] bg-[#222]">
        <span className="ml-2.5 block h-[3px] w-2 bg-[#22a045]" />
      </div>
    </div>
    {layers.map((l) => (
      <div key={l.id} className={clsx("h-6 border-b border-[#1c1c1c] py-px pl-2", l.selected ? "bg-[#474747]" : "bg-[#2f2f2f]")}>
        <div className={clsx("h-[21px]", l.bar)} />
      </div>
    ))}
    {/* playhead */}
    <div className="absolute bottom-0 left-0 top-[58px] flex w-4 flex-col items-center">
      <Icon className="h-4 w-4" box="0 0 16 16">
        <path d="M1 0h14v8l-7 8-7-8z" fill="#3d8adf" />
      </Icon>
      <span className="w-0.5 flex-1 bg-[#3d8adf]" />
    </div>
  </div>
);

const Mountain = ({ className }: { className: string }) => (
  <Icon className={className} box="0 0 20 10">
    <path d="M0 9 7 2l3 3 3-4 7 8z" fill="#aaa" />
  </Icon>
);

const Timeline = () => (
  <section className="flex min-h-0 flex-[435] flex-col bg-[#222]">
    <div className="flex min-h-0 flex-1">
      <div className="w-[617px] shrink-0">
        <div className="flex h-9 items-center overflow-hidden text-base/6 text-[#b0b0b0]">
          <span className="-ml-[11px] whitespace-nowrap">成 1</span>
          <button aria-label="面板菜单" className="ml-4"><MenuLines className="w-3 h-3" /></button>
        </div>
        <TimelineControls />
        <LayerTable />
      </div>
      <Tracks />
    </div>
    <div className="flex h-[22px] shrink-0 items-center border-t border-[#111]">
      <button className="ml-[259px] h-[18px] w-[180px] border border-[#2e2e2e] bg-[#1e1e1e] text-base/4 text-[#8a8a8a]">切换开关 /模式</button>
      <Mountain className="ml-[185px] h-2 w-3" />
      <input
        type="range"
        aria-label="时间轴缩放"
        defaultValue={0}
        className="ml-4 h-3 w-[64px] appearance-none bg-transparent [&::-webkit-slider-runnable-track]:h-0.5 [&::-webkit-slider-runnable-track]:bg-[#444] [&::-webkit-slider-thumb]:-mt-[5px] [&::-webkit-slider-thumb]:size-3 [&::-webkit-slider-thumb]:appearance-none [&::-webkit-slider-thumb]:rounded-full [&::-webkit-slider-thumb]:border-2 [&::-webkit-slider-thumb]:border-[#aaa] [&::-webkit-slider-thumb]:bg-[#222]"
      />
      <Mountain className="ml-4 h-2.5 w-5" />
    </div>
  </section>
);

/* ---------- taskbar ---------- */

const AdobeTile = ({ text, className }: { text: string; className: string }) => (
  <span className={clsx("flex h-[19px] w-[22px] items-center justify-center border-2 text-xs/4 font-bold font-['Noto_Sans',sans-serif]", className)}>{text}</span>
);

const apps: { name: string; icon: ReactNode }[] = [
  {
    name: "文件资源管理器",
    icon: (
      <Icon className="h-5 w-6" box="0 0 24 20">
        <path d="M1 2h9l2 3h11v14H1z" fill="#f2c94f" />
        <path d="M4 2V0h7v5z" fill="#e8a72e" />
        <path d="M6 19v-8h13v8h-4v-4h-5v4z" fill="#5599b8" />
      </Icon>
    ),
  },
  {
    name: "浏览器",
    icon: (
      <Icon className="size-[22px]" box="0 0 22 22">
        {["#ed4c91", "#9e56dd", "#3cc36d", "#8fd22e", "#f4b22c", "#ee5d2b"].map((c, i) => (
          <path key={c} d="M11 11C8 6 9 1 12 0c6 0 10 5 9 8-4-2-7-1-10 3z" fill={c} transform={`rotate(${i * 60} 11 11)`} />
        ))}
        <circle cx="11" cy="11" r="2.500" fill="#fff" />
      </Icon>
    ),
  },
  {
    name: "手机助手",
    icon: (
      <Icon className="size-[22px]" box="0 0 22 22">
        <circle cx="11" cy="11" r="10.500" fill="#2476c8" />
        <path d="M6.500 4h9v14h-9z" fill="#185598" stroke="#e4f1fb" strokeWidth="1.500" />
      </Icon>
    ),
  },
  {
    name: "QQ 浏览器",
    icon: (
      <Icon className="size-[22px]" box="0 0 22 22">
        <circle cx="11" cy="10.500" r="8" stroke="#3484d2" strokeWidth="4" />
        <path d="M10 20c-2-4 3-5 4-3 1-4 6-2 6 1 2 1 1 3-1 3h-7z" fill="#fff" />
      </Icon>
    ),
  },
  {
    name: "便笺",
    icon: (
      <Icon className="h-5 w-[22px]" box="0 0 22 20">
        <path d="M0 0h22v20H0z" fill="#1da6df" />
        <path d="M6 3h10v7H6z" fill="#e8f4ea" />
        <path d="m8 8 3-3 4 1" stroke="#d39a39" />
        <path d="M6 13h11" stroke="#146f9c" strokeWidth="2" />
      </Icon>
    ),
  },
  {
    name: "OBS Studio",
    icon: (
      <Icon className="size-[22px]" box="0 0 22 22">
        <circle cx="11" cy="11" r="9.500" fill="#222" stroke="#999" strokeWidth="1.500" />
        <path d="M8 4c-2 4 0 7 3 7M11 11c3-2 7 0 7 4M11 11c1 4-2 6-6 5" stroke="#999" strokeWidth="2.500" />
      </Icon>
    ),
  },
  { name: "Photoshop", icon: <AdobeTile text="Ps" className="rounded border-[#4f8796] bg-[#0a2430] text-[#c0ebf8]" /> },
  { name: "Premiere Pro", icon: <AdobeTile text="Pr" className="border-[#a045aa] bg-[#2b0732] text-[#c863d0]" /> },
  { name: "After Effects", icon: <AdobeTile text="Ae" className="border-[#8050c0] bg-[#1d0848] text-[#b08cf0]" /> },
];

const Taskbar = () => (
  <footer className="flex h-[37px] shrink-0 items-stretch overflow-hidden bg-[#1c1c1c] pl-1">
    {apps.map((a, i) => (
      <button key={a.name} aria-label={a.name} className={clsx("flex w-[49px] shrink-0 flex-col items-center", i === 6 && "ml-0.5", i === 8 && "bg-[#4a4a4a]")}>
        <span className="flex flex-1 items-center">{a.icon}</span>
        <span className={clsx("h-[3px] bg-[#80b0da]", i === 8 ? "w-full" : "w-[38px]")} />
      </button>
    ))}
    <div className="-mr-[17px] ml-auto flex items-center text-[17px]/6 text-[#d8d8d8]">
      <button aria-label="显示隐藏的图标" className="flex w-8 justify-center">
        <Icon className="h-4 w-4" box="0 0 16 16"><path d="m1 11 7-6 7 6" stroke="#ddd" strokeWidth="1.500" /></Icon>
      </button>
      <button aria-label="麦克风" className="flex w-[31px] justify-center">
        <Icon className="h-5 w-4" box="0 0 16 20">
          <path d="M4 0h8v14H4z" fill="#fff" />
          <path d="M1 9v6h14V9M8 15v4M4 19h8" stroke="#ddd" strokeWidth="1.500" />
        </Icon>
      </button>
      <button aria-label="QQ" className="flex w-[33px] justify-center">
        <Icon className="h-5 w-5" box="0 0 20 20">
          <path d="M10 0c5 0 6 4 6 8l2 6-3 1v4H5v-4l-3-1 2-6c0-4 1-8 6-8z" fill="#080808" />
          <ellipse cx="10" cy="14" rx="5" ry="4.500" fill="#fff" />
          <path d="M3 8c4 3 10 3 14 0v3c-3 2-11 2-14 0z" fill="#d9362b" />
          <path d="M2 18h7v2H2zM11 18h7v2h-7zM7 6h6l-3 2z" fill="#e9a13a" />
          <path d="M7.500 3h2v2h-2zM11 3h2v2h-2z" fill="#fff" />
        </Icon>
      </button>
      <button aria-label="网络" className="flex w-[33px] justify-center">
        <Icon className="h-5 w-[22px]" box="0 0 22 20">
          <path d="M7 4h14v10H4V9M12 14v4M7 18h10M1 2h5v6H1zM3.500 8v6" stroke="#ddd" strokeWidth="1.500" />
        </Icon>
      </button>
      <button aria-label="音量" className="flex w-8 justify-center">
        <Icon className="h-4 w-[22px]" box="0 0 22 16">
          <path d="M1 5h3l4-4v14l-4-4H1zM11 5c2 2 2 4 0 6M14 3c3 3 3 7 0 10" stroke="#ddd" strokeWidth="1.500" />
          <path d="M17 1c4 4 4 10 0 14" stroke="#777" strokeWidth="1.500" />
        </Icon>
      </button>
      <button className="w-[30px] text-base/6">中</button>
      <time className="ml-2.5 text-base/6 font-['Noto_Sans',sans-serif]">16:03</time>
    </div>
  </footer>
);

/* ---------- overlays ---------- */

const Watermark = () => (
  <svg viewBox="0 0 60 130" className="absolute bottom-[22px] left-0 h-[130px] w-[60px]" fill="none">
    <circle cx="-6" cy="65" r="64" fill="#222" stroke="#fff" strokeWidth="2" />
    <circle cx="-6" cy="65" r="62" stroke="#0d1c26" strokeWidth="4" />
    <circle cx="-8" cy="65" r="60" stroke="#fff0e8" strokeWidth="5" />
    <circle cx="-3" cy="62" r="61" stroke="#fff" strokeWidth="1" />
    <text x="47" y="74" textAnchor="end" fontSize="38" fontFamily="Lato, sans-serif" fontWeight="400" fill="#e8f6ff">
      ngX
    </text>
  </svg>
);

const Subtitle = () => (
  <p className="absolute bottom-[108px] left-[654px] h-[72px] whitespace-nowrap bg-[#232323] pl-[17px] pr-[5px] text-[37px]/[60px] font-medium text-[#fafafa]">
    能够看到它们融合的效果
  </p>
);

export default function App() {
  return (
    <div className="relative flex h-screen flex-col overflow-hidden bg-[#161616] font-['Noto_Sans_CJK_SC',sans-serif]">
      <TitleBar />
      <MenuBar />
      <Toolbar />
      <main className="flex min-h-0 flex-1 flex-col">
        <div className="flex min-h-0 flex-[526] pb-[5px] pt-px">
          <EffectControls />
          <Viewer />
          <SidePanels />
        </div>
        <Timeline />
      </main>
      <Taskbar />
      <Watermark />
      <Subtitle />
    </div>
  );
}
